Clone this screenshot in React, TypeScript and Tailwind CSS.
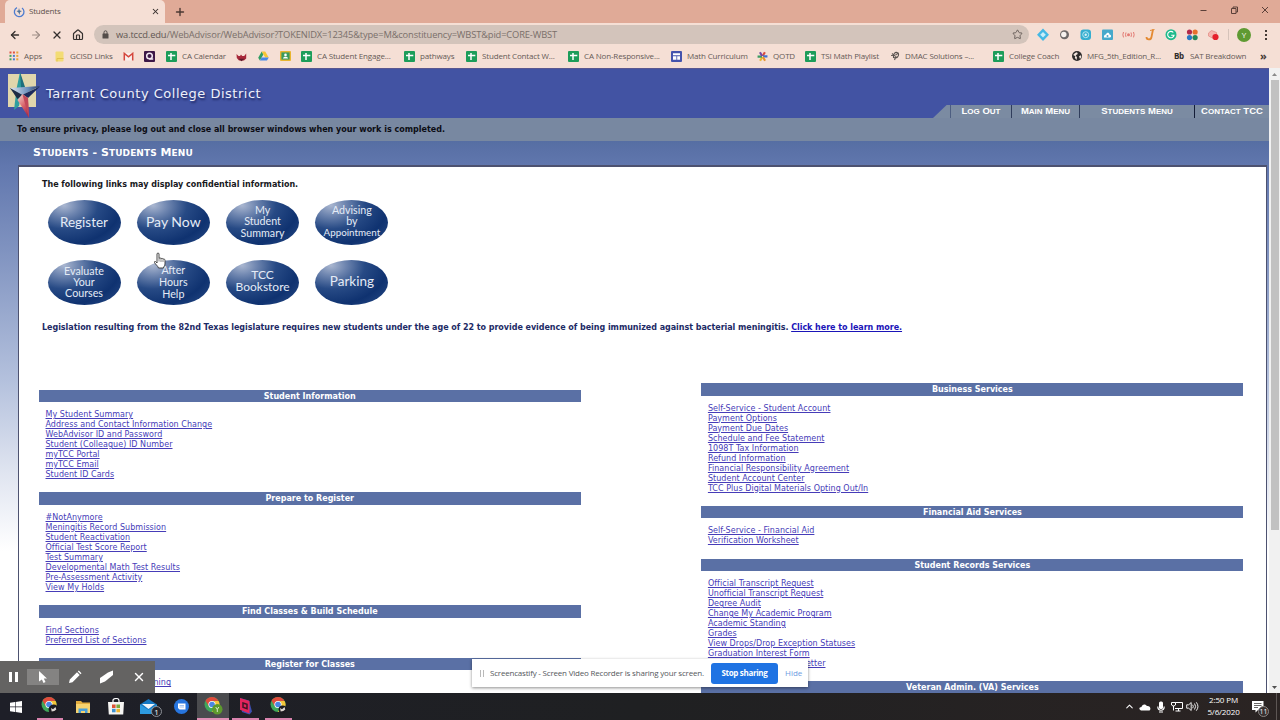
import type { ReactNode } from "react";
import { ArrowLeft, ArrowRight, ChevronUp, House, Plus, Star, X } from "lucide-react";

type Bookmark = { label?: string; icon: ReactNode; width: string };
type Section = { title: string; links: string[] };

/* ---------- small icons ---------- */

function SheetIcon() {
  return (
    <svg width="11" height="11" viewBox="0 0 11 11" className="shrink-0">
      <rect width="11" height="11" rx="1" fill="#1d9d5a" />
      <path d="M5 2v7M2 4.5h7.3" stroke="white" strokeWidth="1.5" />
    </svg>
  );
}

function AppsIcon() {
  const colors = ["#e0533f", "#e0533f", "#e8a33a", "#46a35a", "#4a7fd0", "#e8a33a", "#46a35a", "#4a7fd0", "#e8a33a"];
  return (
    <svg width="10" height="10" viewBox="0 0 10 10" className="shrink-0">
      {colors.map((c, i) => (
        <rect key={i} x={0.5 + (i % 3) * 3.4} y={0.5 + Math.floor(i / 3) * 3.4} width="2" height="2" fill={c} />
      ))}
    </svg>
  );
}

function FolderMark() {
  return (
    <svg width="9" height="11" viewBox="0 0 9 11" className="mx-px shrink-0">
      <rect x="0.5" y="0.5" width="8" height="10" rx="1" fill="#f3dc74" />
      <path d="M2 10.5V7.5h6.5" stroke="#e3c24f" fill="none" />
    </svg>
  );
}

function GmailIcon() {
  return (
    <svg width="11" height="9" viewBox="0 0 11 9" className="shrink-0">
      <path d="M1 1h9v7.5H1z" fill="#f8efec" />
      <path d="M1.3 8.5V1.4l4.2 3.4 4.2-3.4v7.1" fill="none" stroke="#d5463c" strokeWidth="1.5" />
    </svg>
  );
}

function QIcon() {
  return (
    <svg width="11" height="11" viewBox="0 0 11 11" className="shrink-0">
      <rect width="11" height="11" rx="1" fill="#3d1747" />
      <circle cx="5.5" cy="5" r="2.8" fill="none" stroke="#f2e8f2" strokeWidth="1.5" />
      <path d="M5.2 8h4" stroke="#f2e8f2" strokeWidth="1.5" />
    </svg>
  );
}

function FoxIcon() {
  return (
    <svg width="11" height="11" viewBox="0 0 11 11" className="shrink-0">
      <path d="M0.5 3l2 2h1.5l1-1.5 1.2 1.5h2l2-2.5v5L8 9.5H3L.8 7z" fill="#a8283a" />
      <path d="M2.5 7.8l3 2.4 3-2.4z" fill="#5e1a2a" />
    </svg>
  );
}

function DriveIcon() {
  return (
    <svg width="11" height="10" viewBox="0 0 11 10" className="shrink-0">
      <path d="M3.7.6L.2 6.8l1.7 2.8L5.4 3.5z" fill="#2f9d62" />
      <path d="M3.7.6h3.5l3.5 6H7.2z" fill="#f5c535" />
      <path d="M1.9 9.6l1.8-3h7l-1.7 3z" fill="#4688e8" />
    </svg>
  );
}

function ClassroomIcon() {
  return (
    <svg width="11" height="10" viewBox="0 0 11 10" className="shrink-0">
      <rect width="11" height="10" rx="1" fill="#e8b52e" />
      <rect x="1.4" y="1.4" width="8.2" height="7.2" fill="#3a9a5c" />
      <circle cx="5.5" cy="3.9" r="1.3" fill="white" />
      <path d="M3 7.6c0-2.6 5-2.6 5 0z" fill="white" />
    </svg>
  );
}

function SitesIcon() {
  return (
    <svg width="11" height="11" viewBox="0 0 11 11" className="shrink-0">
      <rect width="11" height="11" rx="1" fill="#4453ad" />
      <path d="M2 2.2h7v2H2zM2 5.2h3.4v3.6H2zM6.2 5.2H9v3.6H6.2z" fill="white" />
    </svg>
  );
}

function BurstIcon() {
  const arms = ["#d84a3c", "#3f6fd0", "#e7902c", "#e5b52c", "#3b9b62", "#7446a5"];
  return (
    <svg width="11" height="11" viewBox="-5.5 -5.5 11 11" className="shrink-0">
      {arms.map((c, i) => (
        <path key={c} d="M0 -0.6L1.2 -4.8" stroke={c} strokeWidth="2.1" transform={`rotate(${i * 60 + 15})`} />
      ))}
    </svg>
  );
}

function DmacIcon() {
  return (
    <svg width="10" height="10" viewBox="0 0 10 10" className="shrink-0">
      <path d="M1 4.5h4M2 2.5l3 2.500M8.500 2L5.500 4M6 5L4.500 9" stroke="#6a625e" strokeWidth="1.2" />
      <path d="M3.500 6.500C3 3 5 1 7 1.500s2 3 .500 4.500-2.500.500-4 .500z" fill="none" stroke="#5a534f" strokeWidth="1.1" />
    </svg>
  );
}

function GlobeIcon() {
  return (
    <svg width="10" height="10" viewBox="0 0 10 10" className="shrink-0">
      <circle cx="5" cy="5" r="5" fill="#2e2b2b" />
      <path d="M1.2 4l2.2 1.3-.6 1.5L4.5 9 5 6.5 3.7 4.2 5.8 3 5 1.2 3 2zM7 5.2l2-1 .3 2L8 8z" fill="#f3e5dd" />
    </svg>
  );
}

function ChromeLogo({ badge }: { badge: "photo" | "Y" | "small" }) {
  return (
    <svg width="20" height="20" viewBox="0 0 20 20">
      <circle cx="9" cy="8.5" r="7.5" fill="#3fa75a" />
      <path d="M2.5 4.7A7.5 7.5 0 0 1 15.5 4.8L9 5.2 5.8 10.3z" fill="#e04b3c" />
      <path d="M15.6 4.9A7.5 7.5 0 0 1 8.8 16l3.6-6-1.3-5z" fill="#f5c63a" />
      <circle cx="9" cy="8.5" r="3.6" fill="white" />
      <circle cx="9" cy="8.5" r="2.8" fill="#4b86e4" />
      {badge === "Y" ? (
        <>
          <circle cx="14.3" cy="13.3" r="5.2" fill="#5d9a2d" />
          <path d="M12.7 11l1.6 2.3V16M15.9 11l-1.6 2.3" stroke="#e7f2dc" fill="none" strokeWidth="0.9" />
        </>
      ) : (
        <>
          <circle cx="13.6" cy="13.6" r={badge === "photo" ? 5 : 4} fill="#1c1b22" />
          <path d="M11 12l2 1.2L15.5 11l.8 2.5-2 1.5-2.6.4z" fill="#dcd6d2" />
        </>
      )}
    </svg>
  );
}

/* ---------- browser chrome ---------- */

const bookmarks: Bookmark[] = [
  { label: "Apps", icon: <AppsIcon />, width: "w-[45px]" },
  { label: "GCISD Links", icon: <FolderMark />, width: "w-[69px]" },
  { icon: <GmailIcon />, width: "w-[21px]" },
  { icon: <QIcon />, width: "w-[22px]" },
  { label: "CA Calendar", icon: <SheetIcon />, width: "w-[70px]" },
  { icon: <FoxIcon />, width: "w-[22px]" },
  { icon: <DriveIcon />, width: "w-[22px]" },
  { icon: <ClassroomIcon />, width: "w-[21px]" },
  { label: "CA Student Engage...", icon: <SheetIcon />, width: "w-[103px]" },
  { label: "pathways", icon: <SheetIcon />, width: "w-[62px]" },
  { label: "Student Contact W...", icon: <SheetIcon />, width: "w-[102px]" },
  { label: "CA Non-Responsive...", icon: <SheetIcon />, width: "w-[103px]" },
  { label: "Math Curriculum", icon: <SitesIcon />, width: "w-[86px]" },
  { label: "QOTD", icon: <BurstIcon />, width: "w-[48px]" },
  { label: "TSI Math Playlist", icon: <SheetIcon />, width: "w-[85px]" },
  { label: "DMAC Solutions –...", icon: <DmacIcon />, width: "w-[103px]" },
  { label: "College Coach", icon: <SheetIcon />, width: "w-[79px]" },
  { label: "MFG_5th_Edition_R...", icon: <GlobeIcon />, width: "w-[102px]" },
  {
    label: "SAT Breakdown",
    icon: <span className="w-[11px] shrink-0 text-[8px] font-bold tracking-[-0.3px] text-[#2f2b2a]">Bb</span>,
    width: "w-[86px]",
  },
];

function TabStrip() {
  return (
    <div className="flex h-[23px] shrink-0 justify-between bg-[#e0aa97]">
      <div className="flex items-end">
        <div className="ml-[5px] flex h-[23px] w-[160px] items-center rounded-t-[5px] bg-[#f5dfd5] pl-2 pr-[5px]">
          <svg width="12" height="12" viewBox="0 0 12 12">
            <path d="M4 1.6A4.8 4.8 0 1 0 9 2" fill="none" stroke="#4d7cd0" strokeWidth="1.3" />
            <path d="M6 2l.7 2.5L9 5 7 6.2 6.5 9 5.5 6.5 3.5 5 5.4 4.5z" fill="#52769a" />
          </svg>
          <span className="-mt-[2px] ml-1 flex-1 text-[8px] leading-none tracking-[-0.2px] text-[#5c504b]">Students</span>
          <X size={9} strokeWidth={2.8} className="text-[#38302d]" />
        </div>
        <Plus size={12} strokeWidth={2.8} className="mb-[5px] ml-[9px] text-[#4a3833]" />
      </div>
      <div className="flex h-[19px] items-center pr-[11px] text-[#5b4039]">
        <svg width="70" height="10" viewBox="0 0 70 10" fill="none" stroke="currentColor">
          <path d="M1.500 5.500h6" />
          <path d="M32.500 3.500h4.500v5h-4.500zM34 3.500V2h4.500v5H37" />
          <path d="M63 2l6 6M69 2l-6 6" />
        </svg>
      </div>
    </div>
  );
}

function Extensions() {
  return (
    <div className="flex items-center">
      <svg width="194" height="20" viewBox="0 0 194 20">
        <path d="M10 3.500l6 6.200-6 6.200-6-6.200z" fill="#45b8e4" />
        <path d="M10 7l2.800 2.700L10 12.400 7.200 9.700z" fill="#c9eefa" />
        <circle cx="31.500" cy="9.700" r="4.500" fill="#6d6868" />
        <circle cx="30.800" cy="9.500" r="2.700" fill="#f6f1ee" />
        <rect x="47.500" y="4.500" width="10.500" height="10.500" rx="3" fill="#35aed0" />
        <circle cx="52.700" cy="9.700" r="3" fill="none" stroke="#b5e6f0" strokeWidth="1" />
        <circle cx="52.700" cy="9.700" r="1.200" fill="#d6f2f7" />
        <rect x="69" y="4.500" width="11" height="10.500" rx="1" fill="#47a9cb" />
        <path d="M71 12.500c-.500-2.500 1.500-3 2-3 .500-2.500 3.500-2 3.500 0 2 0 2 3 .500 3z" fill="white" />
        <circle cx="74.500" cy="11" r="1" fill="#47a9cb" />
        <path d="M90.500 7q-1.300 2.700 0 5.400M93 7.500q-1 2.200 0 4.400M100.500 7q1.300 2.700 0 5.400M98 7.500q1 2.200 0 4.400" fill="none" stroke="#e37a73" strokeWidth="1" />
        <circle cx="95.500" cy="9.700" r="1.500" fill="#e37a73" />
        <path d="M120 4.500l-1.500 7.500c-.700 3.500-5 3-5 0" fill="none" stroke="#e48a32" strokeWidth="1.800" />
        <path d="M117 5.500l4.500-1" stroke="#e48a32" />
        <circle cx="138" cy="9.700" r="5.500" fill="#1fba8b" />
        <path d="M140.300 7.500a3.200 3.200 0 1 0 .700 2.800h-2.800" fill="none" stroke="white" strokeWidth="1.100" />
        <circle cx="156.500" cy="7" r="2.600" fill="#b22a4b" />
        <circle cx="162.100" cy="7" r="2.600" fill="#e8702d" />
        <circle cx="156.500" cy="12.600" r="2.600" fill="#2878c4" />
        <circle cx="162.100" cy="12.600" r="2.600" fill="#22875a" />
        <path d="M175.500 8l3-2.500 5 2v4l-4 1.500-4-2z" fill="#f3b6af" stroke="#e58f88" strokeWidth="0.800" />
        <circle cx="182.500" cy="12" r="3.100" fill="#e5202b" />
      </svg>
      <div className="ml-px h-[11px] w-px bg-[#d5c3ba]" />
      <div className="ml-[8px] flex size-[14px] items-center justify-center rounded-full bg-[#5f9a33] text-[8px] text-white">Y</div>
      <div className="ml-[14px] flex w-[3px] flex-col gap-[2px]">
        <span className="size-[2px] bg-[#453a36]" />
        <span className="size-[2px] bg-[#453a36]" />
        <span className="size-[2px] bg-[#453a36]" />
      </div>
    </div>
  );
}

function AddressBar() {
  return (
    <div className="flex h-[23px] shrink-0 items-center bg-[#f5dfd5] text-[#35302e]">
      <ArrowLeft size={12} strokeWidth={2.6} className="ml-[9px]" />
      <ArrowRight size={12} strokeWidth={2.2} className="ml-[9px] text-[#9d8d86]" />
      <X size={12} strokeWidth={2.6} className="ml-[9px]" />
      <House size={12} strokeWidth={2.4} className="ml-[9px]" />
      <div className="ml-[10px] flex h-[19px] w-[935px] items-center rounded-full bg-[#d3c4bb] pl-[8px] pr-[6px]">
        <svg width="7" height="9" viewBox="0 0 7 9">
          <rect x="0.500" y="3.500" width="6" height="5" rx="0.500" fill="#544d4a" />
          <path d="M2 4V2.300a1.500 1.500 0 0 1 3 0V4" fill="none" stroke="#544d4a" />
        </svg>
        <span className="ml-[7px] flex-1 whitespace-nowrap text-[9.33px] tracking-[-0.142px] text-[#7a6f6a]">
          <span className="text-[#5f5652]">wa.tccd.edu</span>
          /WebAdvisor/WebAdvisor?TOKENIDX=12345&amp;type=M&amp;constituency=WBST&amp;pid=CORE-WBST
        </span>
        <Star size={11} strokeWidth={2} className="text-[#655b57]" />
      </div>
      <div className="ml-[4px]">
        <Extensions />
      </div>
    </div>
  );
}

function BookmarksBar() {
  return (
    <div className="flex h-[22px] shrink-0 items-center bg-[#f5dfd5] pb-[2px] pl-[9px] text-[8px] text-[#655a55]">
      {bookmarks.map((b, i) => (
        <div key={i} className={`flex shrink-0 items-center gap-[5px] whitespace-nowrap ${b.width}`}>
          {b.icon}
          {b.label && <span className="tracking-[-0.16px]">{b.label}</span>}
        </div>
      ))}
      <span className="-mt-[2px] text-[11px] font-bold leading-none text-[#453a36]">»</span>
    </div>
  );
}

/* ---------- college page ---------- */

// Small capitals with a taller lowercase than the browser synthesises
function SmallCaps({ text }: { text: string }) {
  return (
    <>
      {text.split(" ").map((word, i) => {
        const plain = word === word.toUpperCase();
        return (
          <span key={i}>
            {i > 0 && " "}
            {plain ? word : word[0]}
            {!plain && <span className="text-[1.22em] leading-none [font-variant:small-caps]">{word.slice(1)}</span>}
          </span>
        );
      })}
    </>
  );
}

function CollegeLogo() {
  return (
    <svg width="34" height="49" viewBox="0 0 34 49" className="shrink-0 overflow-visible">
      <defs>
        <linearGradient id="redArm" x1="0" y1="0" x2="0.5" y2="1">
          <stop offset="0" stopColor="#f3d9d2" />
          <stop offset="0.6" stopColor="#d9636a" />
          <stop offset="1" stopColor="#a8304e" />
        </linearGradient>
        <linearGradient id="blueArm" x1="0" y1="0" x2="1" y2="0">
          <stop offset="0" stopColor="#dfe8f0" />
          <stop offset="0.6" stopColor="#6d8fbd" />
          <stop offset="1" stopColor="#25355e" />
        </linearGradient>
      </defs>
      <rect x="2" y="5" width="28" height="33" fill="#e0d6ac" />
      <path d="M14 3l-3.500 17-2.500 21 5-4 4-20z" fill="#2f9f9f" />
      <path d="M14 3l5 15-3.500 7z" fill="#1e6f7c" />
      <path d="M4 19l8.500 1 4 6-5 4z" fill="#1c2b45" />
      <path d="M4 19l15-1 15-1-17.500 9z" fill="url(#blueArm)" />
      <path d="M34 17.500L16 26l6 3z" fill="#1b2a5c" />
      <path d="M11.500 31l5-6 5.500 4L23 49z" fill="url(#redArm)" />
      <path d="M16.500 25.500l5.500 3.500L23 49z" fill="#c2495a" />
    </svg>
  );
}

function SiteHeader() {
  return (
    <div className="flex h-[50px] shrink-0 justify-between border-t border-[#5a5790] bg-[#4253a3]">
      <div className="flex pl-[6px]">
        <CollegeLogo />
        <h1 className="ml-[6px] mt-[15px] whitespace-nowrap text-[13px] leading-[19px] tracking-[0.51px] text-[#eef0fa] [text-shadow:1px_2px_2px_#1c2560]">
          Tarrant County College District
        </h1>
      </div>
      <div className="mt-auto flex h-[13px] font-['Liberation_Sans',sans-serif] text-[9.5px] font-bold leading-[12px] text-white">
        <div className="w-[17px] bg-[#7b8ba2] [clip-path:polygon(0_100%,80%_0,100%_0,100%_100%)]" />
        <a className="w-[61px] whitespace-nowrap border-l border-[#4d5e81] bg-[#7b8ba2] text-center"><SmallCaps text="Log Out" /></a>
        <a className="w-[68px] whitespace-nowrap border-l border-[#303d5c] bg-[#7b8ba2] text-center"><SmallCaps text="Main Menu" /></a>
        <a className="w-[115px] whitespace-nowrap border-l border-[#303d5c] bg-[#7b8ba2] text-center"><SmallCaps text="Students Menu" /></a>
        <a className="w-[75px] whitespace-nowrap border-l border-[#141d38] bg-[#7b8ba2] text-center"><SmallCaps text="Contact TCC" /></a>
      </div>
    </div>
  );
}

const buttons: { lines: string[]; size: string }[] = [
  { lines: ["Register"], size: "pb-[2px] text-[13.5px] leading-[14px]" },
  { lines: ["Pay Now"], size: "pb-[2px] text-[14px] leading-[14px]" },
  { lines: ["My", "Student", "Summary"], size: "pb-[3px] text-[10.700px] leading-[11.300px]" },
  { lines: ["Advising", "by", "Appointment"], size: "pb-[3px] text-[10.700px] leading-[11.300px]" },
  { lines: ["Evaluate", "Your", "Courses"], size: "pb-[1px] text-[10.700px] leading-[11.300px]" },
  { lines: ["After", "Hours", "Help"], size: "text-[10.700px] leading-[11.700px]" },
  { lines: ["TCC", "Bookstore"], size: "pb-[2px] text-[12px] leading-[12.500px]" },
  { lines: ["Parking"], size: "pb-[2px] text-[13.5px] leading-[14px]" },
];

function OvalButtons() {
  return (
    <div className="ml-[28.500px] mt-[9px] grid w-[342px] grid-cols-[repeat(4,73px)] gap-x-[16.300px] gap-y-[14.500px] font-[Lato,sans-serif]">
      {buttons.map((b) => (
        <div
          key={b.lines[0]}
          className={`flex h-[45px] flex-col items-center justify-center whitespace-nowrap rounded-[50%] bg-[radial-gradient(ellipse_at_22%_12%,#a9b6d0_0%,#6f86b0_18%,#274a85_42%,#0f3270_70%,#2a4d88_100%)] text-[#e4ebf6] ${b.size}`}
        >
          {b.lines.map((l) => (
            <span key={l} className={l === "Appointment" ? "text-[9.800px]" : ""}>
              {l}
            </span>
          ))}
        </div>
      ))}
    </div>
  );
}

const leftSections: Section[] = [
  {
    title: "Student Information",
    links: [
      "My Student Summary",
      "Address and Contact Information Change",
      "WebAdvisor ID and Password",
      "Student (Colleague) ID Number",
      "myTCC Portal",
      "myTCC Email",
      "Student ID Cards",
    ],
  },
  {
    title: "Prepare to Register",
    links: [
      "#NotAnymore",
      "Meningitis Record Submission",
      "Student Reactivation",
      "Official Test Score Report",
      "Test Summary",
      "Developmental Math Test Results",
      "Pre-Assessment Activity",
      "View My Holds",
    ],
  },
  { title: "Find Classes & Build Schedule", links: ["Find Sections", "Preferred List of Sections"] },
  { title: "Register for Classes", links: ["ning"] },
];

const rightSections: Section[] = [
  {
    title: "Business Services",
    links: [
      "Self-Service - Student Account",
      "Payment Options",
      "Payment Due Dates",
      "Schedule and Fee Statement",
      "1098T Tax Information",
      "Refund Information",
      "Financial Responsibility Agreement",
      "Student Account Center",
      "TCC Plus Digital Materials Opting Out/In",
    ],
  },
  { title: "Financial Aid Services", links: ["Self-Service - Financial Aid", "Verification Worksheet"] },
  {
    title: "Student Records Services",
    links: [
      "Official Transcript Request",
      "Unofficial Transcript Request",
      "Degree Audit",
      "Change My Academic Program",
      "Academic Standing",
      "Grades",
      "View Drops/Drop Exception Statuses",
      "Graduation Interest Form",
      "etter",
    ],
  },
  { title: "Veteran Admin. (VA) Services", links: [] },
];

// links whose start runs underneath one of the floating bars
const indents: Record<string, string> = {
  ning: "ml-[108px]",
  etter: "ml-[98px]",
};

function MenuSection({ title, links }: Section) {
  return (
    <section className="mb-[13.300px]">
      <h2 className="h-[12.500px] whitespace-nowrap bg-[#5a70a5] text-center text-[8px] font-bold leading-[13.500px] text-white">{title}</h2>
      <ul className="mt-[7px] pl-[6.500px]">
        {links.map((l) => (
          <li key={l} className="h-[10px] whitespace-nowrap text-[8px] leading-[11px] tracking-[0.04px] text-[#463cb8]">
            <a className={`underline ${indents[l] ?? ""}`}>{l}</a>
          </li>
        ))}
      </ul>
    </section>
  );
}

function Scrollbar() {
  return (
    <div className="flex w-[11px] shrink-0 flex-col items-center bg-[#f1f1f1]">
      <div className="flex h-[12px] items-center text-[#8a8a8a]">
        <svg width="5" height="3" viewBox="0 0 5 3"><path d="M0 3l2.500-3L5 3z" fill="currentColor" /></svg>
      </div>
      <div className="h-[450px] w-[8px] bg-[#c1c1c1]" />
      <div className="mt-auto flex h-[12px] items-center">
        <svg width="5" height="3" viewBox="0 0 5 3"><path d="M0 0l2.500 3L5 0z" fill="#505050" /></svg>
      </div>
    </div>
  );
}

function CollegePage() {
  return (
    <div className="flex min-h-0 flex-1 font-['DejaVu_Sans',Verdana,sans-serif]">
      <div className="flex w-[1269px] shrink-0 flex-col overflow-hidden">
        <SiteHeader />
        <div className="h-[23px] shrink-0 whitespace-nowrap bg-[#7888a1] pl-[17px] text-[8px] font-bold leading-[24px] text-[#0c0d14]">
          To ensure privacy, please log out and close all browser windows when your work is completed.
        </div>
        <div className="flex min-h-0 flex-1 flex-col bg-[linear-gradient(to_bottom,#566ea3_0,#6177ae_25px,#8093c0_110px,#b4c1dd_240px,#dfe4f0_330px,#ffffff_410px)] pl-[18px] pr-[2px]">
          <div className="h-[24px] shrink-0 whitespace-nowrap pl-[15px] text-[11px] font-bold leading-[24px] tracking-[0.06px] text-white">
            <SmallCaps text="Students - Students Menu" />
          </div>
          <div className="min-h-0 flex-1 overflow-hidden border-x border-t-2 border-[#4d5270] bg-white">
            <p className="mt-[11px] whitespace-nowrap pl-[23px] text-[8px] font-bold leading-[13px] text-[#17181c]">
              The following links may display confidential information.
            </p>
            <OvalButtons />
            <p className="mt-[17px] whitespace-nowrap pl-[23px] text-[8px] font-bold leading-[12px] tracking-[-0.037px] text-[#1d2b66]">
              Legislation resulting from the 82nd Texas legislature requires new students under the age of 22 to provide evidence of being immunized against bacterial meningitis.{" "}
              <a className="text-[#1a14b8] underline">Click here to learn more.</a>
            </p>
            <div className="mt-[49.500px] flex">
              <div className="ml-[20px] mt-[6.500px] w-[541.500px]">
                {leftSections.map((s) => (
                  <MenuSection key={s.title} {...s} />
                ))}
              </div>
              <div className="ml-[120.900px] w-[542px]">
                {rightSections.map((s) => (
                  <MenuSection key={s.title} {...s} />
                ))}
              </div>
            </div>
          </div>
        </div>
      </div>
      <Scrollbar />
    </div>
  );
}

/* ---------- floating bars ---------- */

function DrawToolbar() {
  return (
    <div className="absolute left-0 top-[661px] flex h-[32px] w-[155px] items-center bg-[#646362]">
      <div className="flex w-[27px] justify-center gap-[3px]">
        <span className="h-[10px] w-[3px] bg-white" />
        <span className="h-[10px] w-[3px] bg-white" />
      </div>
      <div className="flex h-[16px] w-[32px] items-center justify-center bg-[#848382]">
        <svg width="10" height="12" viewBox="0 0 10 12"><path d="M1 0l8 7.500H5.800L7.500 11l-2 1-1.600-3.500L1 10.500z" fill="white" /></svg>
      </div>
      <svg width="14" height="14" viewBox="0 0 14 14" className="ml-[9px]">
        <path d="M1 13l.800-3.500L9 2.300 11.700 5 4.500 12.200zM9.800 1.500l1-1 2.700 2.700-1 1z" fill="white" />
      </svg>
      <svg width="15" height="14" viewBox="0 0 15 14" className="ml-[17px]">
        <path d="M1 8l8-5.500 5-2v4.500l-8 6.500-5 2z" fill="white" />
      </svg>
      <X size={14} strokeWidth={2.400} className="ml-[18px] text-white" />
    </div>
  );
}

function SharingBar() {
  return (
    <div className="absolute left-[472px] top-[659px] flex h-[28px] w-[336px] items-center whitespace-nowrap bg-white pl-[8px] text-[8px] shadow-[0_1px_3px_rgba(0,0,0,0.45)]">
      <span className="h-[7px] w-[4px] border-x border-[#b9b9b9]" />
      <span className="ml-[6px] w-[215px] tracking-[-0.2px] text-[#55585c]">Screencastify - Screen Video Recorder is sharing your screen.</span>
      <button className="ml-[6px] h-[21px] w-[67px] rounded-[3px] bg-[#1f73e3] font-bold tracking-[-0.33px] text-white">Stop sharing</button>
      <span className="ml-[7px] text-[#6e9bdf]">Hide</span>
    </div>
  );
}

function HandCursor() {
  return (
    <svg width="14" height="17" viewBox="0 0 14 17" className="absolute left-[153px] top-[252px]">
      <path
        d="M4 9.500V2c0-1.300 2-1.300 2 0v4.500c.500-.900 2-.700 2 .300.500-.700 2-.500 2 .500.500-.600 2-.300 2 .900V12c0 2-1.500 2.500-1.500 4H5.500C5 14 2.500 12.500 1.500 10.500 1 9.300 2.500 8.700 4 11z"
        fill="white"
        stroke="#333"
        strokeWidth="0.900"
      />
      <path d="M6 6.500v3M8 7v3M10 7.500v2.500" stroke="#555" strokeWidth="0.700" />
    </svg>
  );
}

/* ---------- taskbar ---------- */

function Taskbar() {
  return (
    <div className="flex h-[27px] shrink-0 justify-between bg-[linear-gradient(to_right,#1e1f28,#1f2022_50%,#2b2423)] font-['Open_Sans',sans-serif]">
      <div className="flex">
        <div className="flex w-[34px] items-center justify-center">
          <svg width="12" height="12" viewBox="0 0 12 12" fill="white" className="-ml-[2px]">
            <path d="M0 1.700L5 1v4.600H0zM5.600.900L12 0v5.600H5.600zM0 6.200h5v4.700l-5-.700zM5.600 6.200H12V12l-6.400-1z" />
          </svg>
        </div>
        <div className="flex w-[32px] items-center justify-center px-[3px]">
          <div className="flex h-full w-full items-center justify-center border-b-2 border-[#d983ae]">
            <ChromeLogo badge="photo" />
          </div>
        </div>
        <div className="flex w-[33px] items-center justify-center">
          <svg width="16" height="14" viewBox="0 0 16 14">
            <path d="M1 1h5l1.500 1.500H15V13H1z" fill="#e3ad3f" />
            <path d="M1 4h14v9H1z" fill="#f7d36f" />
            <path d="M3.500 13V8.500h9V13h-2.500v-2H6v2z" fill="#4a9fd8" />
          </svg>
        </div>
        <div className="flex w-[33px] items-center justify-center">
          <svg width="16" height="17" viewBox="0 0 16 17">
            <path d="M5 5V2.500a3 2 0 0 1 6 0V5" fill="none" stroke="white" strokeWidth="1.200" />
            <path d="M0 4h16l-.800 12.500H.800z" fill="#f6f5f3" />
            <path d="M4 6.500h3.600V10H4z" fill="#dd5236" />
            <path d="M8.400 6.500H12V10H8.400z" fill="#79a83c" />
            <path d="M4 10.800h3.600v3.500H4z" fill="#3e91d0" />
            <path d="M8.400 10.800H12v3.500H8.400z" fill="#edb534" />
          </svg>
        </div>
        <div className="flex w-[33px] items-center justify-center">
          <div className="relative">
            <svg width="17" height="15" viewBox="0 0 17 15">
              <path d="M0 5.500L8.500 0 17 5.500V15H0z" fill="#1678c2" />
              <path d="M2 5h13L8.500 10z" fill="#f1f6fa" />
              <path d="M0 5.500L8.500 11 17 5.500V15H0z" fill="#2d9be0" />
            </svg>
            <span className="absolute -bottom-[3px] -right-[5px] flex size-[11px] items-center justify-center rounded-full border border-[#8c8f96] bg-[#22242c] text-[8px] leading-none text-white">
              1
            </span>
          </div>
        </div>
        <div className="flex w-[32px] items-center justify-center">
          <svg width="15" height="15" viewBox="0 0 15 15">
            <circle cx="7.500" cy="7.500" r="7.500" fill="#2775de" />
            <path d="M4 4.500h7.500v6H5.500L4 9z" fill="white" />
            <path d="M5.500 6.500h4.500M5.500 8h4.500" stroke="#8bb4ee" strokeWidth="0.800" />
          </svg>
        </div>
        <div className="flex w-[32px] items-center justify-center border-b-2 border-[#e08fb5] bg-[#4a4b4e]"><ChromeLogo badge="Y" /></div>
        <div className="flex w-[33px] items-center justify-center px-[3px]">
          <div className="flex h-full w-full items-center justify-center border-b-2 border-[#d983ae]">
            <svg width="12" height="18" viewBox="0 0 12 18">
              <path d="M0 1l9 2.500 3 11-2.500 3L2 15z" fill="#3c4fb0" />
              <path d="M0 1l9.500 3v12.500L0 12.800z" fill="#e4245c" />
              <path d="M3 6l4 1.200v4.500L3 10.200z" fill="none" stroke="#411426" strokeWidth="1.500" />
            </svg>
          </div>
        </div>
        <div className="flex w-[33px] items-center justify-center px-[3px]">
          <div className="flex h-full w-full items-center justify-center border-b-2 border-[#d983ae]">
            <ChromeLogo badge="small" />
          </div>
        </div>
      </div>

      <div className="flex items-center text-white">
        <ChevronUp size={11} strokeWidth={2.200} />
        <svg width="12" height="8" viewBox="0 0 12 8" className="ml-[4px]">
          <path d="M2 7.500C-.500 6.500 0 4 2.500 4 3 1 6.500.500 8 3c3-.500 4.500 3 2.500 4.500z" fill="white" />
        </svg>
        <svg width="8" height="12" viewBox="0 0 8 12" className="ml-[6px]">
          <rect x="2" y="0.500" width="4" height="7.500" rx="1.500" fill="white" />
          <path d="M.800 5.500c0 5 6.400 5 6.400 0M2 11h4" fill="none" stroke="white" strokeWidth="1.200" />
        </svg>
        <svg width="12" height="11" viewBox="0 0 12 11" className="ml-[6px]" fill="none" stroke="white">
          <path d="M4 1.500h7.500v6H4M7.500 7.500v2.500M4.500 10h5M2.500 5v4.500" />
          <path d="M.500 1.500h4V4L3 5H2L.500 4z" fill="#2a2524" />
        </svg>
        <svg width="13" height="11" viewBox="0 0 13 11" className="ml-[3px]" fill="none" stroke="white" strokeWidth="0.900">
          <path d="M.700 3.800h2L5.200 1.500v8L2.700 7.200h-2zM6.700 3.800q1.200 1.700 0 3.400M8.500 2.500q2.200 3 0 6M10.300 1.300q3.300 4.200 0 8.400" />
        </svg>
        <div className="ml-[8px] flex w-[33px] flex-col items-center whitespace-nowrap pb-[2px] text-[8px] leading-[12px] tracking-[-0.15px]">
          <span>2:50 PM</span>
          <span>5/6/2020</span>
        </div>
        <div className="relative ml-[12px] mr-[12px]">
          <svg width="12" height="12" viewBox="0 0 12 12">
            <path d="M0 0h11.500v9H6l-2.500 2.500V9H0z" fill="white" />
            <path d="M2 2.500h7.500M2 4.500h7.500M2 6.500h4" stroke="#2a2524" strokeWidth="0.700" />
          </svg>
          <span className="absolute -bottom-[4px] -right-[5px] flex size-[11px] items-center justify-center rounded-full border border-[#8b8583] bg-[#37302f] text-[7px] leading-none">
            11
          </span>
        </div>
        <div className="mr-[3px] h-[27px] w-px bg-[#5d5654]" />
      </div>
    </div>
  );
}

export default function App() {
  return (
    <div className="relative flex h-[720px] w-[1280px] flex-col overflow-hidden bg-white font-['Open_Sans',sans-serif]">
      <TabStrip />
      <AddressBar />
      <BookmarksBar />
      <CollegePage />
      <Taskbar />
      <DrawToolbar />
      <SharingBar />
      <HandCursor />
    </div>
  );
}
